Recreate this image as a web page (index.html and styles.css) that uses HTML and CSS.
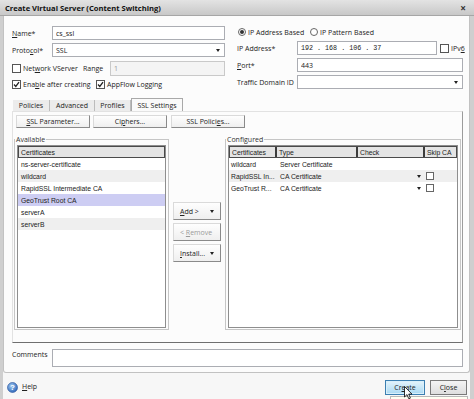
FILE: index.html
```html
<!DOCTYPE html>
<html lang="en">
<head>
    <meta charset="UTF-8">
    <title>Create Virtual Server (Content Switching)</title>
    <link rel="stylesheet" href="styles.css">
</head>
<body>
<div class="dialog">
    <div class="titlebar">
        <span class="title">Create Virtual Server (Content Switching)</span>
        <span class="close-x">&#215;</span>
    </div>
    <div class="frame">
        <div class="panel">
            <div class="top">
                <div class="col-left">
                    <div class="row r-name">
                        <span class="lbl"><u>N</u>ame*</span>
                        <input class="text-input" type="text" value="cs_ssl">
                    </div>
                    <div class="row r-proto">
                        <span class="lbl">Proto<u>c</u>ol*</span>
                        <div class="select"><span>SSL</span><span class="arrow"></span></div>
                    </div>
                    <div class="row r-net">
                        <span class="check"></span>
                        <span class="chk-lbl net-lbl">Net<u>w</u>ork VServer</span>
                        <span class="range-lbl">Range</span>
                        <input class="text-input range" type="text" value="1" disabled>
                    </div>
                    <div class="row r-enable">
                        <span class="check on"><svg width="7" height="7" viewBox="0 0 7 7"><path d="M1 3.5 L2.8 5.4 L6 1.2" fill="none" stroke="#222" stroke-width="1.3"/></svg></span>
                        <span class="chk-lbl enable-lbl">Ena<u>b</u>le after creating</span>
                        <span class="check on"><svg width="7" height="7" viewBox="0 0 7 7"><path d="M1 3.5 L2.8 5.4 L6 1.2" fill="none" stroke="#222" stroke-width="1.3"/></svg></span>
                        <span class="chk-lbl">AppFlow Logging</span>
                    </div>
                </div>
                <div class="col-right">
                    <div class="row r-radio">
                        <span class="radio on"></span>
                        <span class="chk-lbl radio-lbl">IP Address Based</span>
                        <span class="radio"></span>
                        <span class="chk-lbl">IP Pattern Based</span>
                    </div>
                    <div class="row r-ip">
                        <span class="lbl wide">IP Address*</span>
                        <input class="text-input ip" type="text" value="192 . 168 . 106 . 37">
                        <span class="check ipv6-box"></span>
                        <span class="chk-lbl">IPv<u>6</u></span>
                    </div>
                    <div class="row r-port">
                        <span class="lbl wide"><u>P</u>ort*</span>
                        <input class="text-input" type="text" value="443">
                    </div>
                    <div class="row r-domain">
                        <span class="lbl wide">Traffic Domain ID</span>
                        <div class="select"><span></span><span class="arrow"></span></div>
                    </div>
                </div>
            </div>

            <div class="tabs">
                <div class="tab t-policies">Policies</div>
                <div class="tab t-advanced">Advanced</div>
                <div class="tab t-profiles">Profiles</div>
                <div class="tab t-ssl active">SSL Settings</div>
            </div>
            <div class="tab-panel">
                <div class="btn-row">
                    <div class="btn"><u>S</u>SL Parameter...</div>
                    <div class="btn">Ci<u>p</u>hers...</div>
                    <div class="btn">SSL Polici<u>e</u>s...</div>
                </div>
                <div class="lists">
                    <fieldset class="group available">
                        <legend>Available</legend>
                        <div class="list">
                            <div class="list-head">Certificates</div>
                            <div class="list-row">ns-server-certificate</div>
                            <div class="list-row alt">wildcard</div>
                            <div class="list-row">RapidSSL Intermediate CA</div>
                            <div class="list-row selected">GeoTrust Root CA</div>
                            <div class="list-row">serverA</div>
                            <div class="list-row alt">serverB</div>
                        </div>
                    </fieldset>
                    <div class="move-btns">
                        <div class="btn side"><span><u>A</u>dd &gt;</span><span class="arrow"></span></div>
                        <div class="btn side disabled"><span>&lt; <u>R</u>emove</span></div>
                        <div class="btn side"><span><u>I</u>nstall...</span><span class="arrow"></span></div>
                    </div>
                    <fieldset class="group configured">
                        <legend>Configured</legend>
                        <div class="list">
                            <div class="list-head cols">
                                <span class="c1">Certificates</span>
                                <span class="c2">Type</span>
                                <span class="c3">Check</span>
                                <span class="c4">Skip CA</span>
                            </div>
                            <div class="list-row cols">
                                <span class="c1">wildcard</span>
                                <span class="c2">Server Certificate</span>
                                <span class="c3"></span>
                                <span class="c4"></span>
                            </div>
                            <div class="list-row cols alt">
                                <span class="c1">RapidSSL In...</span>
                                <span class="c2">CA Certificate</span>
                                <span class="c3"><span class="arrow"></span></span>
                                <span class="c4"><span class="check small"></span></span>
                            </div>
                            <div class="list-row cols">
                                <span class="c1">GeoTrust R...</span>
                                <span class="c2">CA Certificate</span>
                                <span class="c3"><span class="arrow"></span></span>
                                <span class="c4"><span class="check small"></span></span>
                            </div>
                        </div>
                    </fieldset>
                </div>
            </div>

            <div class="comments">
                <span class="lbl">Comments</span>
                <input class="text-input" type="text" value="">
            </div>
        </div>

        <div class="footer">
            <svg class="help-icon" width="11" height="11" viewBox="0 0 11 11">
                <defs>
                    <radialGradient id="hg" cx="0.4" cy="0.35" r="0.7">
                        <stop offset="0" stop-color="#9fc8f0"/>
                        <stop offset="1" stop-color="#2b64b8"/>
                    </radialGradient>
                </defs>
                <circle cx="5.5" cy="5.5" r="5" fill="url(#hg)" stroke="#27509a" stroke-width="0.6"/>
                <text x="5.5" y="8.3" text-anchor="middle" font-family="Liberation Sans" font-weight="bold" font-size="8" fill="#fff">?</text>
            </svg>
            <span class="help-lbl"><u>H</u>elp</span>
            <div class="footer-btns">
                <div class="btn create">Cr<u>e</u>ate</div>
                <div class="btn close">C<u>l</u>ose</div>
            </div>
        </div>
    </div>

    <!-- tooltip and mouse pointer over the Create button -->
    <div class="tooltip"></div>
    <svg class="cursor" width="9" height="14" viewBox="0 0 9 14">
        <path d="M0.5 0.5 L0.5 11 L3 8.6 L4.8 12.8 L6.4 12.1 L4.7 8.1 L8 8.1 Z" fill="#fff" stroke="#000" stroke-width="0.8"/>
    </svg>
</div>
</body>
</html>
```

FILE: styles.css
```css
/* Styles globaux */
body {
    margin: 0;
    font-family: "Open Sans", "Noto Sans", sans-serif;
    font-size: 7px;
    color: #222;
    background: #fff;
    white-space: nowrap;
}
.dialog {
    position: relative;
    width: 474px;
    height: 399px;
    overflow: hidden;
}
.titlebar {
    height: 15px;
    padding: 0 8px 0 5px;
    display: flex;
    align-items: center;
    justify-content: space-between;
    background: linear-gradient(#e3e3e3, #c8c8c8);
    border-bottom: 1px solid #a6a6a6;
}
.title {
    font-weight: bold;
    font-size: 7.6px;
    color: #111;
}
.close-x {
    font-weight: bold;
    font-size: 10px;
    color: #333;
}
.frame {
    height: 383px;
    display: flex;
    flex-direction: column;
    border-left: 3px solid #cfcfcf;
    border-right: 4px solid #cfcfcf;
    background: #f7f7f7;
}
.panel {
    height: 357px;
    box-sizing: border-box;
    padding: 10px 6px 5px 8px;
    background: #fcfcfc;
    border: 1px solid #c2c2c2;
    border-top: none;
    border-radius: 0 0 3px 3px;
}

/* champs du haut */
.top {
    display: flex;
    gap: 12px;
    height: 64px;
}
.col-left {
    width: 213px;
}
.col-right {
    width: 226px;
}
.row {
    display: flex;
    align-items: center;
}
.r-name, .r-proto, .r-ip, .r-port, .r-domain {
    height: 14px;
}
.r-proto {
    margin-top: 3px;
}
.r-net {
    height: 15px;
    margin-top: 4px;
}
.r-enable {
    height: 12px;
    margin-top: 2px;
}
.r-radio {
    height: 12px;
}
.r-ip, .r-port, .r-domain {
    margin-top: 3px;
}
.lbl {
    width: 40px;
    flex: none;
}
.lbl.wide {
    width: 60px;
}
.text-input {
    flex: 1;
    min-width: 0;
    height: 14px;
    box-sizing: border-box;
    margin: 0;
    padding: 0 3px;
    border: 1px solid #abadb3;
    background: #fff;
    font: inherit;
    color: #222;
    outline: none;
}
.text-input.range {
    flex: none;
    width: 115px;
    height: 15px;
    background: #f4f4f4;
    border-color: #c9c9c9;
    color: #999;
}
.text-input.ip {
    flex: none;
    width: 140px;
    font-family: "Liberation Mono", monospace;
    font-size: 6.7px;
}
.select {
    flex: 1;
    height: 14px;
    box-sizing: border-box;
    padding: 0 4px 0 3px;
    display: flex;
    align-items: center;
    justify-content: space-between;
    border: 1px solid #abadb3;
    background: #fff;
}
.arrow {
    width: 0;
    height: 0;
    border-left: 2.5px solid transparent;
    border-right: 2.5px solid transparent;
    border-top: 3px solid #222;
}
.check {
    width: 9px;
    height: 9px;
    flex: none;
    box-sizing: border-box;
    display: inline-flex;
    align-items: center;
    justify-content: center;
    border: 1px solid #555;
    background: #fff;
}
.check.small {
    width: 8px;
    height: 8px;
    border-color: #666;
}
.chk-lbl {
    margin-left: 2px;
}
.net-lbl {
    width: 60px;
    flex: none;
}
.range-lbl {
    width: 27px;
    flex: none;
}
.enable-lbl {
    width: 73px;
    flex: none;
}
.radio {
    width: 8px;
    height: 8px;
    flex: none;
    box-sizing: border-box;
    display: inline-flex;
    align-items: center;
    justify-content: center;
    border: 1px solid #666;
    border-radius: 50%;
    background: #fff;
}
.radio.on::after {
    content: "";
    width: 4px;
    height: 4px;
    border-radius: 50%;
    background: #333;
}
.radio-lbl {
    width: 62px;
    flex: none;
}
.r-radio .radio:first-child {
    margin-left: 1px;
}
.ipv6-box {
    margin-left: 3px;
}

/* onglets */
.tabs {
    display: flex;
    align-items: flex-end;
    height: 13px;
    margin-top: 8px;
    margin-left: 1px;
}
.tab {
    height: 11px;
    display: flex;
    align-items: center;
    justify-content: center;
    background: #ececec;
    border-right: 1px solid #bcbcbc;
    box-sizing: border-box;
}
.t-policies { width: 37px; }
.t-advanced { width: 45px; }
.t-profiles { width: 36px; }
.t-ssl { width: 52px; }
.tab.active {
    height: 13px;
    background: #fafafa;
    border: 1px solid #a9a9a9;
    border-bottom: none;
}
.tab-panel {
    height: 232px;
    box-sizing: border-box;
    padding: 3px 0 0 1px;
    border: 1px solid;
    border-color: #e2e2e2 #9c9c9c #6f6f6f #e2e2e2;
}
.btn-row {
    display: flex;
    gap: 3px;
    margin-left: 2px;
}
.btn {
    height: 13px;
    box-sizing: border-box;
    display: flex;
    align-items: center;
    justify-content: center;
    background: linear-gradient(#fefefe, #efefef);
    border: 1px solid;
    border-color: #dadada #8a8a8a #8a8a8a #dadada;
}
.btn-row .btn {
    width: 74px;
}
.btn-row .btn:last-child {
    margin-left: 1px;
}

/* listes */
.lists {
    display: flex;
    margin-top: 7px;
}
.group {
    height: 195px;
    box-sizing: border-box;
    margin: 0;
    padding: 1px 2px 2px 2px;
    border: 1px solid #c6c6c6;
}
.group legend {
    margin-left: -2px;
    padding: 0 1px;
    line-height: 9px;
    color: #333;
}
.available {
    width: 155px;
}
.configured {
    width: 236px;
}
.list {
    height: 183px;
    box-sizing: border-box;
    border: 1px solid #8e8e8e;
    background: #fff;
    font-family: "Liberation Sans", Arial, sans-serif;
    font-size: 6.8px;
    color: #222;
}
.list-head {
    height: 12px;
    box-sizing: border-box;
    padding-left: 2px;
    display: flex;
    align-items: center;
    background: #e4e4e4;
    border: 1px solid #4a4a4a;
}
.list-row {
    height: 12px;
    padding-left: 3px;
    display: flex;
    align-items: center;
}
.list-row.alt {
    background: #efefef;
}
.list-row.selected {
    background: #cdcdf3;
}
.cols {
    padding-left: 0;
}
.list-head.cols {
    padding-left: 0;
}
.cols > span {
    height: 100%;
    box-sizing: border-box;
    padding-left: 2px;
    display: flex;
    align-items: center;
}
.list-head.cols > span {
    border-right: 2px solid #3c3c3c;
}
.list-head.cols > span:last-child {
    border-right: none;
}
.c1 { width: 47px; }
.c2 { width: 81px; }
.c3 { width: 67px; }
.c4 { flex: 1; }
.list-row .c2 {
    padding-left: 4px;
}
.list-row .c3 {
    justify-content: flex-end;
    padding-right: 3px;
}
.move-btns {
    width: 56px;
    padding: 67px 0 0 4px;
    box-sizing: border-box;
}
.btn.side {
    width: 48px;
    height: 18px;
    margin-bottom: 3px;
    padding: 0 6px;
    justify-content: space-between;
}
.btn.disabled {
    color: #9a9a9a;
}

/* commentaires */
.comments {
    display: flex;
    height: 18px;
    margin-top: 6px;
}
.comments .lbl {
    padding-top: 1px;
}
.comments .text-input {
    height: 18px;
}

/* bas de la fenetre */
.footer {
    flex: 1;
    display: flex;
    align-items: flex-start;
    padding: 7px 3px 0 4px;
}
.help-icon {
    margin-top: 2px;
}
.help-lbl {
    margin: 2px 0 0 4px;
}
.footer-btns {
    display: flex;
    gap: 5px;
    margin-left: auto;
}
.btn.create {
    width: 40px;
    height: 15px;
    border: 1px solid #3c7fb1;
    background: linear-gradient(#e5f4fc, #a9d9f3);
    box-shadow: inset 0 0 0 1px #d8effa;
}
.btn.close {
    width: 37px;
    height: 15px;
    border: 1px solid #7a7a7a;
    background: linear-gradient(#f4f4f4, #dedede);
}
.tooltip {
    position: absolute;
    left: 390px;
    top: 396px;
    width: 76px;
    height: 8px;
    background: #fffff2;
    border: 1px solid #b8b8b8;
}
.cursor {
    position: absolute;
    left: 404px;
    top: 386px;
}
```
